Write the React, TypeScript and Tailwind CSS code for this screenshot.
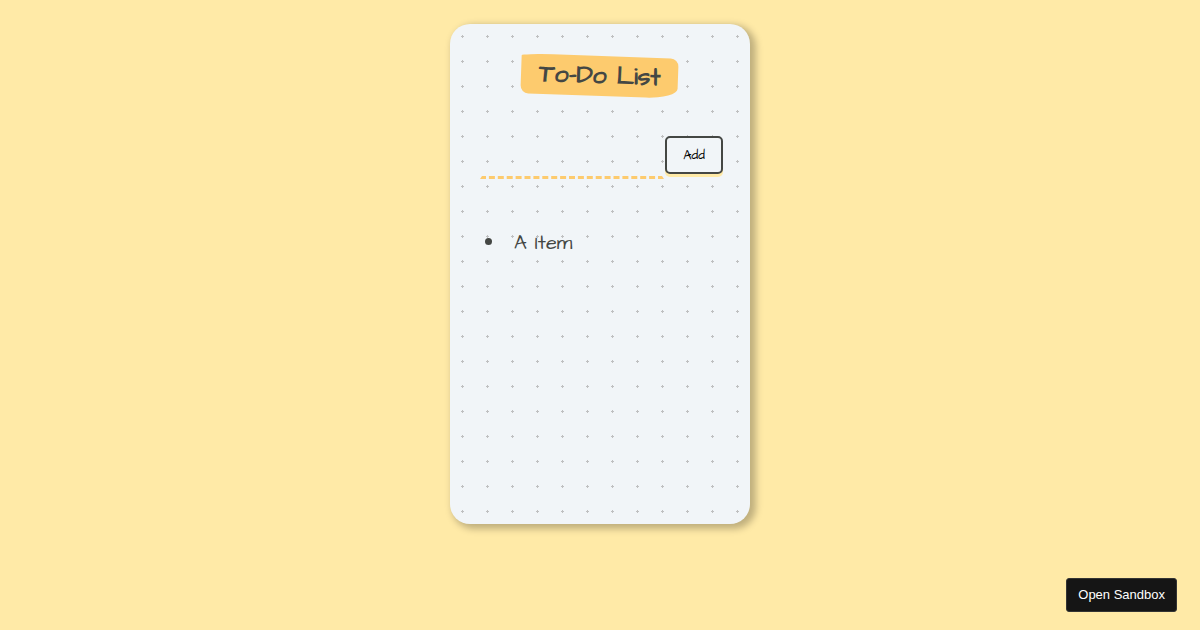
import { useState, type FormEvent } from "react";

export default function App() {
  const [text, setText] = useState("");
  const [items, setItems] = useState<string[]>(["A Item"]);

  const addItem = (event: FormEvent) => {
    event.preventDefault();
    if (!text.trim()) return;
    setItems([...items, text]);
    setText("");
  };

  return (
    <div className="min-h-screen bg-[#ffeaa7] px-4 py-6 font-['Architects_Daughter','Lato',sans-serif] text-[#444744]">
      <main className="mx-auto min-h-[500px] w-full max-w-[300px] rounded-[20px] bg-[#f1f5f8] bg-[radial-gradient(#bfc0c1_7.2%,transparent_0)] bg-[length:25px_25px] px-[30px] py-8 shadow-[4px_3px_7px_2px_#00000040]">
        <header className="flex justify-center">
          <h1 className="rotate-2 rounded-[20%_5%_20%_5%/5%_20%_25%_20%] bg-[#fdcb6e] px-[18px] py-1 text-[25px] leading-8 font-bold whitespace-nowrap">
            To-Do List
          </h1>
        </header>

        <form onSubmit={addItem} className="mt-10 -mr-[3px] flex items-start gap-px">
          <input
            aria-label="New item"
            value={text}
            onChange={(event) => setText(event.target.value)}
            className="h-[43px] min-w-0 flex-1 border-2 border-b-[3px] border-dashed border-transparent border-b-[#fdcb6e] bg-transparent px-1 text-lg outline-none"
          />
          <button
            type="submit"
            className="h-[38px] w-[58px] rounded-[5px] border-2 border-[#444744] bg-[#f1f5f8] pt-0.5 text-[13px] text-black shadow-[0_3px_0_#ffeaa7]"
          >
            Add
          </button>
        </form>

        <ul className="mt-[50px] pl-[5px]">
          {items.map((item, index) => (
            <li key={index} className="flex items-center gap-[22px] text-xl leading-7">
              <span aria-hidden="true" className="mb-1 size-[7px] shrink-0 rounded-full bg-[#444744]" />
              {item}
            </li>
          ))}
        </ul>
      </main>

      <a
        href="#sandbox"
        className="fixed right-[23px] bottom-[18px] rounded-[3px] border border-[#343434] bg-[#151515] px-[11px] py-2 font-['Liberation_Sans',sans-serif] text-[13px] leading-4 text-white"
      >
        Open Sandbox
      </a>
    </div>
  );
}
